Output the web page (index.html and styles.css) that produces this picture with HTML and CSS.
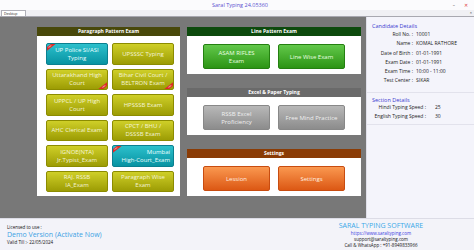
FILE: index.html
```html
<!DOCTYPE html>
<html lang="en">
<head>
    <meta charset="UTF-8">
    <title>Saral Typing 24.05360</title>
    <link rel="stylesheet" href="styles.css">
</head>
<body>
    <div class="titlebar">
        <span></span>
        <span class="title">Saral Typing 24.05360</span>
        <span class="controls"><span class="min">&#8211;</span><span class="close">&#10005;</span></span>
    </div>
    <div class="tabstrip">
        <div class="tab">Desktop</div>
        <span class="tab-x">&#215;</span>
    </div>

    <div class="main">
        <div class="workspace">
            <div class="panel para">
                <div class="panel-head">Paragraph Pattern Exam</div>
                <div class="para-grid">
                    <div class="btn cyan new-left">UP Police SI/ASI<br>Typing</div>
                    <div class="btn olive">UPSSSC Typing</div>
                    <div class="btn olive new-right">Uttarakhand High<br>Court</div>
                    <div class="btn olive new-right">Bihar Civil Court /<br>BELTRON Exam</div>
                    <div class="btn olive">UPPCL / UP High<br>Court</div>
                    <div class="btn olive">HPSSSB Exam</div>
                    <div class="btn olive">AHC Clerical Exam</div>
                    <div class="btn olive">CPCT / BHU /<br>DSSSB Exam</div>
                    <div class="btn olive">IGNOE(NTA)<br>Jr.Typist_Exam</div>
                    <div class="btn cyan new-left right-text">Mumbai<br>High-Court_Exam</div>
                    <div class="btn olive">RAJ. RSSB<br>IA_Exam</div>
                    <div class="btn olive">Paragraph Wise<br>Exam</div>
                </div>
            </div>

            <div class="side-col">
                <div class="panel small">
                    <div class="panel-head green-head">Line Pattern Exam</div>
                    <div class="pair">
                        <div class="btn green">ASAM RIFLES<br>Exam</div>
                        <div class="btn green">Line Wise Exam</div>
                    </div>
                </div>
                <div class="panel small">
                    <div class="panel-head gray-head">Excel &amp; Paper Typing</div>
                    <div class="pair">
                        <div class="btn gray">RSSB Excel<br>Proficiency</div>
                        <div class="btn gray">Free Mind Practice</div>
                    </div>
                </div>
                <div class="panel small">
                    <div class="panel-head brown-head">Settings</div>
                    <div class="pair">
                        <div class="btn orange">Lession</div>
                        <div class="btn orange">Settings</div>
                    </div>
                </div>
            </div>
        </div>

        <div class="info">
            <div class="info-title">Candidate Details</div>
            <div class="details">
                <span class="lbl">Roll No. :</span><span>10001</span>
                <span class="lbl">Name :</span><span>KOMAL RATHORE</span>
                <span class="lbl">Date of Birth :</span><span>01-01-1991</span>
                <span class="lbl">Exam Date :</span><span>01-01-1991</span>
                <span class="lbl">Exam Time :</span><span>10:00 - 11:00</span>
                <span class="lbl">Test Center :</span><span>SIKAR</span>
            </div>
            <div class="info-title sep">Section Details</div>
            <div class="details speeds">
                <span class="lbl">Hindi Typing Speed :</span><span>25</span>
                <span class="lbl">English Typing Speed :</span><span>30</span>
            </div>
            <div class="sep-line"></div>
        </div>
    </div>

    <div class="footer">
        <div class="license">
            <div class="tiny">Licensed to use :</div>
            <div class="demo">Demo Version (Activate Now)</div>
            <div class="tiny">Valid Till :- 22/05/2024</div>
        </div>
        <div class="brand">
            <div class="brand-name">SARAL TYPING SOFTWARE</div>
            <div class="link">https://www.saraltyping.com</div>
            <div class="tiny">support@saraltyping.com</div>
            <div class="tiny">Call &amp; WhatsApp : +91-8949833966</div>
        </div>
    </div>
</body>
</html>
```

FILE: styles.css
```css
* {
    margin: 0;
    padding: 0;
    box-sizing: border-box;
}

body {
    width: 474px;
    height: 250px;
    overflow: hidden;
    background-color: #f3f3f9;
    font-family: "Open Sans", "Noto Sans", sans-serif;
    font-size: 5.5px;
    color: #222;
}

.titlebar {
    height: 10px;
    display: grid;
    grid-template-columns: 1fr auto 1fr;
    align-items: center;
    background-color: #fbfbfd;
}

.title {
    color: #5a4fd0;
    font-size: 5.5px;
    padding-left: 6px;
}

.controls {
    display: flex;
    justify-content: flex-end;
    gap: 9px;
    padding-right: 6px;
    font-size: 4.5px;
}

.min {
    color: #555;
}

.close {
    color: #e04040;
}

.tabstrip {
    height: 7px;
    display: flex;
    align-items: flex-end;
    justify-content: space-between;
    background-color: #f0f0f4;
    border-bottom: 1px solid #a8a8b0;
    padding-left: 1px;
}

.tab {
    width: 25px;
    height: 6px;
    background-color: #fff;
    border: 1px solid #b0b0b8;
    border-bottom: none;
    font-size: 3.5px;
    line-height: 5px;
    padding-left: 2px;
}

.tab-x {
    font-size: 4px;
    line-height: 6px;
    padding-right: 2px;
    color: #333;
}

.main {
    display: flex;
    height: 201px;
}

.workspace {
    width: 366px;
    background-color: #787878;
    display: flex;
    gap: 7px;
    padding: 10px 5px 0 37px;
}

.panel {
    background-color: #fff;
    display: flex;
    flex-direction: column;
}

.para {
    width: 143px;
    height: 169px;
}

.panel-head {
    height: 9px;
    background-color: #48480a;
    color: #fff;
    font-weight: bold;
    font-size: 5px;
    text-align: center;
    line-height: 9px;
}

.green-head {
    background-color: #0d4a0d;
}

.gray-head {
    background-color: #6a6a6a;
}

.brown-head {
    background-color: #8a3c06;
}

.para-grid {
    display: grid;
    grid-template-columns: 62px 62px;
    grid-auto-rows: 21.5px;
    gap: 4px 4px;
    padding: 7px 0 0 9px;
}

.side-col {
    flex: 1;
    display: flex;
    flex-direction: column;
    gap: 14px;
}

.small {
    height: 47px;
}

.pair {
    display: flex;
    gap: 8px;
    padding: 8px 16px 0 16px;
}

.pair .btn {
    flex: 1;
    height: 25px;
}

.btn {
    position: relative;
    overflow: hidden;
    display: flex;
    align-items: center;
    justify-content: center;
    text-align: center;
    font-size: 6px;
    line-height: 8px;
    border-radius: 2px;
    color: #f4f4d8;
}

.olive {
    background: linear-gradient(#cfcf28, #9c9c04);
    border: 1px solid #8c8c00;
}

.cyan {
    background: linear-gradient(#2cc0cc, #0893a2);
    border: 1px solid #0a8090;
    color: #eaffff;
}

.green {
    background: linear-gradient(#62c84a, #2c9414);
    border: 1px solid #248010;
    color: #eaffe0;
}

.gray {
    background: linear-gradient(#b8b8b8, #8c8c8c);
    border: 1px solid #888;
    color: #f0f0f0;
}

.orange {
    background: linear-gradient(#fa9850, #dc5814);
    border: 1px solid #c84c10;
    color: #fff0e0;
}

.right-text {
    justify-content: flex-end;
    text-align: right;
    padding-right: 3px;
}

.new-left::before,
.new-right::after {
    content: 'new';
    position: absolute;
    width: 14px;
    height: 3px;
    background-color: #e02828;
    color: #fff;
    font-size: 2px;
    line-height: 3px;
    text-align: center;
}

.new-left::before {
    top: 1px;
    left: -4px;
    transform: rotate(-38deg);
}

.new-right::after {
    bottom: 1px;
    right: -4px;
    transform: rotate(-38deg);
}

.info {
    flex: 1;
    background-color: #f4f4fb;
    border-left: 1px solid #e0e0ea;
    padding: 5px 0 0 5px;
}

.info-title {
    color: #3b3bd0;
    font-size: 5.5px;
    height: 9px;
}

.sep {
    border-top: 1px solid #e2e2ec;
    margin: 5px 0 0 -5px;
    padding: 3px 0 0 5px;
    height: 12px;
}

.details {
    display: grid;
    grid-template-columns: 41px auto;
    column-gap: 3px;
    grid-auto-rows: 9.3px;
    font-size: 5px;
    color: #222;
}

.lbl {
    text-align: right;
}

.speeds {
    grid-template-columns: 54px auto;
    column-gap: 9px;
}

.sep-line {
    border-top: 1px solid #e2e2ec;
    margin: 2px 0 0 -5px;
}

.footer {
    height: 32px;
    display: flex;
    border-top: 1px solid #dcdce6;
    background-color: #f3f3f9;
}

.license {
    width: 295px;
    padding: 5px 0 0 7px;
}

.tiny {
    font-size: 4.5px;
    line-height: 6px;
    color: #111;
}

.demo {
    color: #3ca2e4;
    font-size: 7px;
    line-height: 9px;
}

.brand {
    width: 172px;
    text-align: center;
    padding-top: 2px;
}

.brand-name {
    color: #3aa8e8;
    font-size: 7px;
    line-height: 9px;
}

.link {
    color: #3a3ae0;
    font-size: 4.5px;
    line-height: 6px;
}
```
